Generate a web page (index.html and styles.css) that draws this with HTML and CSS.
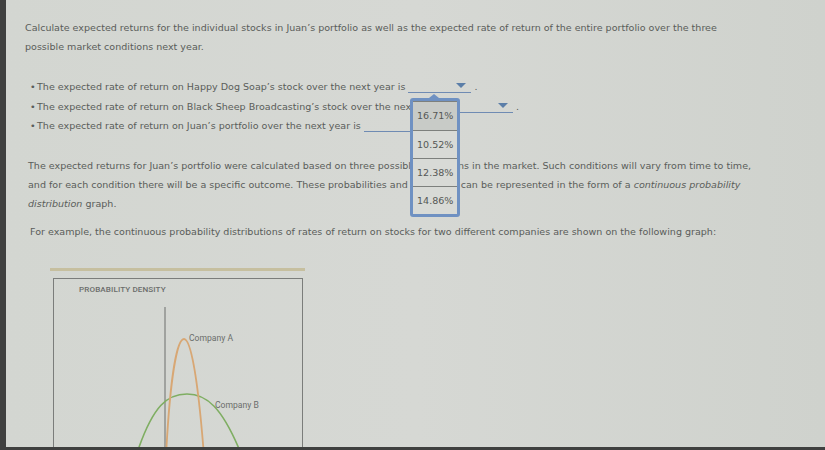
FILE: index.html
```html
<!DOCTYPE html>
<html lang="en">
<head>
    <meta charset="UTF-8">
    <title>Expected Returns</title>
    <link rel="stylesheet" href="styles.css">
</head>
<body>
    <div class="screen">
        <p class="intro">Calculate expected returns for the individual stocks in Juan’s portfolio as well as the expected rate of return of the entire portfolio over the three<br>possible market conditions next year.</p>

        <ul class="answers">
            <li>The expected rate of return on Happy Dog Soap’s stock over the next year is <span class="select w1"><span class="arrow"></span></span> .</li>
            <li>The expected rate of return on Black Sheep Broadcasting’s stock over the next year is <span class="select w2"><span class="arrow"></span></span> .
                <!-- open dropdown -->
                <div class="menu">
                    <span class="caret"></span>
                    <div class="option active">16.71%</div>
                    <div class="option">10.52%</div>
                    <div class="option">12.38%</div>
                    <div class="option">14.86%</div>
                </div>
            </li>
            <li>The expected rate of return on Juan’s portfolio over the next year is <span class="select w3"></span></li>
        </ul>

        <p class="text">The expected returns for Juan’s portfolio were calculated based on three possible conditions in the market. Such conditions will vary from time to time,<br>and for each condition there will be a specific outcome. These probabilities and outcomes can be represented in the form of a <em>continuous probability</em><br><em>distribution</em> graph.</p>

        <p class="example">For example, the continuous probability distributions of rates of return on stocks for two different companies are shown on the following graph:</p>

        <div class="chart">
            <div class="chart-bar"></div>
            <div class="chart-box">
                <div class="axis-title">PROBABILITY DENSITY</div>
                <svg class="plot" width="248" height="160" viewBox="0 0 248 160">
                    <line x1="111" y1="13" x2="111" y2="160" stroke="#6d6f6d" stroke-width="1"/>
                    <path d="M82 162 C 99 110, 114 100, 133 100 C 152 100, 168 112, 188 162" fill="none" stroke="#7fae62" stroke-width="1.6"/>
                    <path d="M112 162 C 116 85, 123 45, 130 45 C 137 45, 144 85, 150 162" fill="none" stroke="#d8a774" stroke-width="1.8"/>
                    <text x="135" y="47" class="label">Company A</text>
                    <text x="161" y="114" class="label">Company B</text>
                </svg>
            </div>
        </div>
    </div>
</body>
</html>
```

FILE: styles.css
```css
body {
    margin: 0;
    padding: 0;
    background-color: #3f403f;
    font-family: "DejaVu Sans", Verdana, sans-serif;
}

.screen {
    height: 447px;
    margin-left: 6px;
    padding: 18px 0 0 19px;
    box-sizing: border-box;
    overflow: hidden;
    background: linear-gradient(90deg, #d3d6d1 0%, #d6d8d4 50%, #cfd2cd 100%);
    color: #5a5d5a;
    font-size: 9.55px;
    line-height: 19px;
}

p {
    margin: 0;
}

.answers {
    list-style: none;
    margin: 21px 0 0 0;
    padding: 0 0 0 5px;
    line-height: 19.5px;
}

.answers li {
    position: relative;
}

.answers li::before {
    content: "•";
    display: inline-block;
    width: 7px;
}

.select {
    display: inline-block;
    position: relative;
    height: 12px;
    vertical-align: -3px;
    border-bottom: 1px solid #6f8bb3;
}

.w1 { width: 63px; }
.w2 { width: 60px; }
.w3 { width: 48px; }

.arrow {
    position: absolute;
    right: 5px;
    top: 3px;
    width: 0;
    height: 0;
    border-left: 5px solid transparent;
    border-right: 5px solid transparent;
    border-top: 5px solid #5b7ea8;
}

.menu {
    position: absolute;
    left: 380px;
    top: 1px;
    width: 44px;
    border: 3px solid #6f91c2;
    border-radius: 3px;
    background-color: #d8dad6;
    z-index: 2;
}

.caret {
    position: absolute;
    left: 16px;
    top: -7px;
    width: 0;
    height: 0;
    border-left: 5px solid transparent;
    border-right: 5px solid transparent;
    border-bottom: 4px solid #6f91c2;
}

.option {
    height: 27px;
    line-height: 27px;
    padding-left: 4px;
    border-top: 1px solid #7d807d;
    color: #555855;
}

.option:first-child + .option {
    border-top: none;
}

.option.active {
    background-color: #c8cbc7;
    height: 28px;
}

.text {
    margin: 20px 0 0 3px;
}

.example {
    margin: 9px 0 0 5px;
}

.chart {
    margin: 27px 0 0 25px;
    width: 255px;
}

.chart-bar {
    height: 3px;
    background-color: #c6bf9f;
}

.chart-box {
    margin: 7px 0 0 3px;
    width: 248px;
    height: 200px;
    border: 1px solid #7b7d7b;
    border-bottom: none;
}

.axis-title {
    padding: 5px 0 0 25px;
    font-family: Roboto, "DejaVu Sans", sans-serif;
    font-size: 8.1px;
    font-weight: 500;
    line-height: 10px;
    color: #6b6d6b;
    letter-spacing: 0.1px;
}

.plot {
    display: block;
}

.label {
    font-family: Roboto, "DejaVu Sans", sans-serif;
    font-size: 8.6px;
    fill: #6b6d6b;
}
```
